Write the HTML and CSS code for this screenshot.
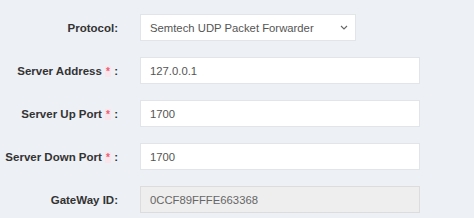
FILE: index.html
```html
<!DOCTYPE html>
<html lang="en">
<head>
    <meta charset="UTF-8">
    <meta name="viewport" content="width=device-width, initial-scale=1.0">
    <title>Packet Forwarder</title>
    <link rel="stylesheet" href="styles.css">
</head>
<body>
    <form class="form-panel">
        <div class="form-row">
            <label class="form-label">Protocol:</label>
            <div class="select-box">
                <span>Semtech UDP Packet Forwarder</span>
                <svg class="chevron" width="8" height="5" viewBox="0 0 8 5">
                    <path d="M1 1 L4 4 L7 1" fill="none" stroke="#666" stroke-width="1.1"/>
                </svg>
            </div>
        </div>
        <div class="form-row">
            <label class="form-label">Server Address <span class="req">*</span> :</label>
            <div class="text-input">127.0.0.1</div>
        </div>
        <div class="form-row">
            <label class="form-label">Server Up Port <span class="req">*</span> :</label>
            <div class="text-input">1700</div>
        </div>
        <div class="form-row">
            <label class="form-label">Server Down Port <span class="req">*</span> :</label>
            <div class="text-input">1700</div>
        </div>
        <div class="form-row">
            <label class="form-label">GateWay ID:</label>
            <div class="text-input disabled">0CCF89FFFE663368</div>
        </div>
    </form>
</body>
</html>
```

FILE: styles.css
```css
body {
    margin: 0;
    padding: 0;
    background: #edf0f5;
    font-family: "Liberation Sans", Arial, sans-serif;
    font-size: 11.3px;
    color: #555;
}

.form-panel {
    display: flex;
    flex-direction: column;
    gap: 16px;
    padding-top: 14px;
}

.form-row {
    display: grid;
    grid-template-columns: 118px 280px;
    column-gap: 22px;
    align-items: center;
    height: 27px;
}

.form-label {
    text-align: right;
    font-size: 11.5px;
    font-weight: bold;
    color: #333;
    white-space: nowrap;
}

.req {
    color: #ec5a72;
    background: #fae6ea;
    font-size: 10px;
    padding: 0 1px;
}

.text-input,
.select-box {
    box-sizing: border-box;
    height: 27px;
    background: #fff;
    border: 1px solid #e1e4e8;
    padding: 0 9px;
    display: flex;
    align-items: center;
    color: #555;
}

.select-box {
    width: 216px;
    justify-content: space-between;
    padding-right: 7px;
}

.text-input.disabled {
    background: #eeeeee;
    color: #666;
    border-color: #dcdcdc;
}
```
